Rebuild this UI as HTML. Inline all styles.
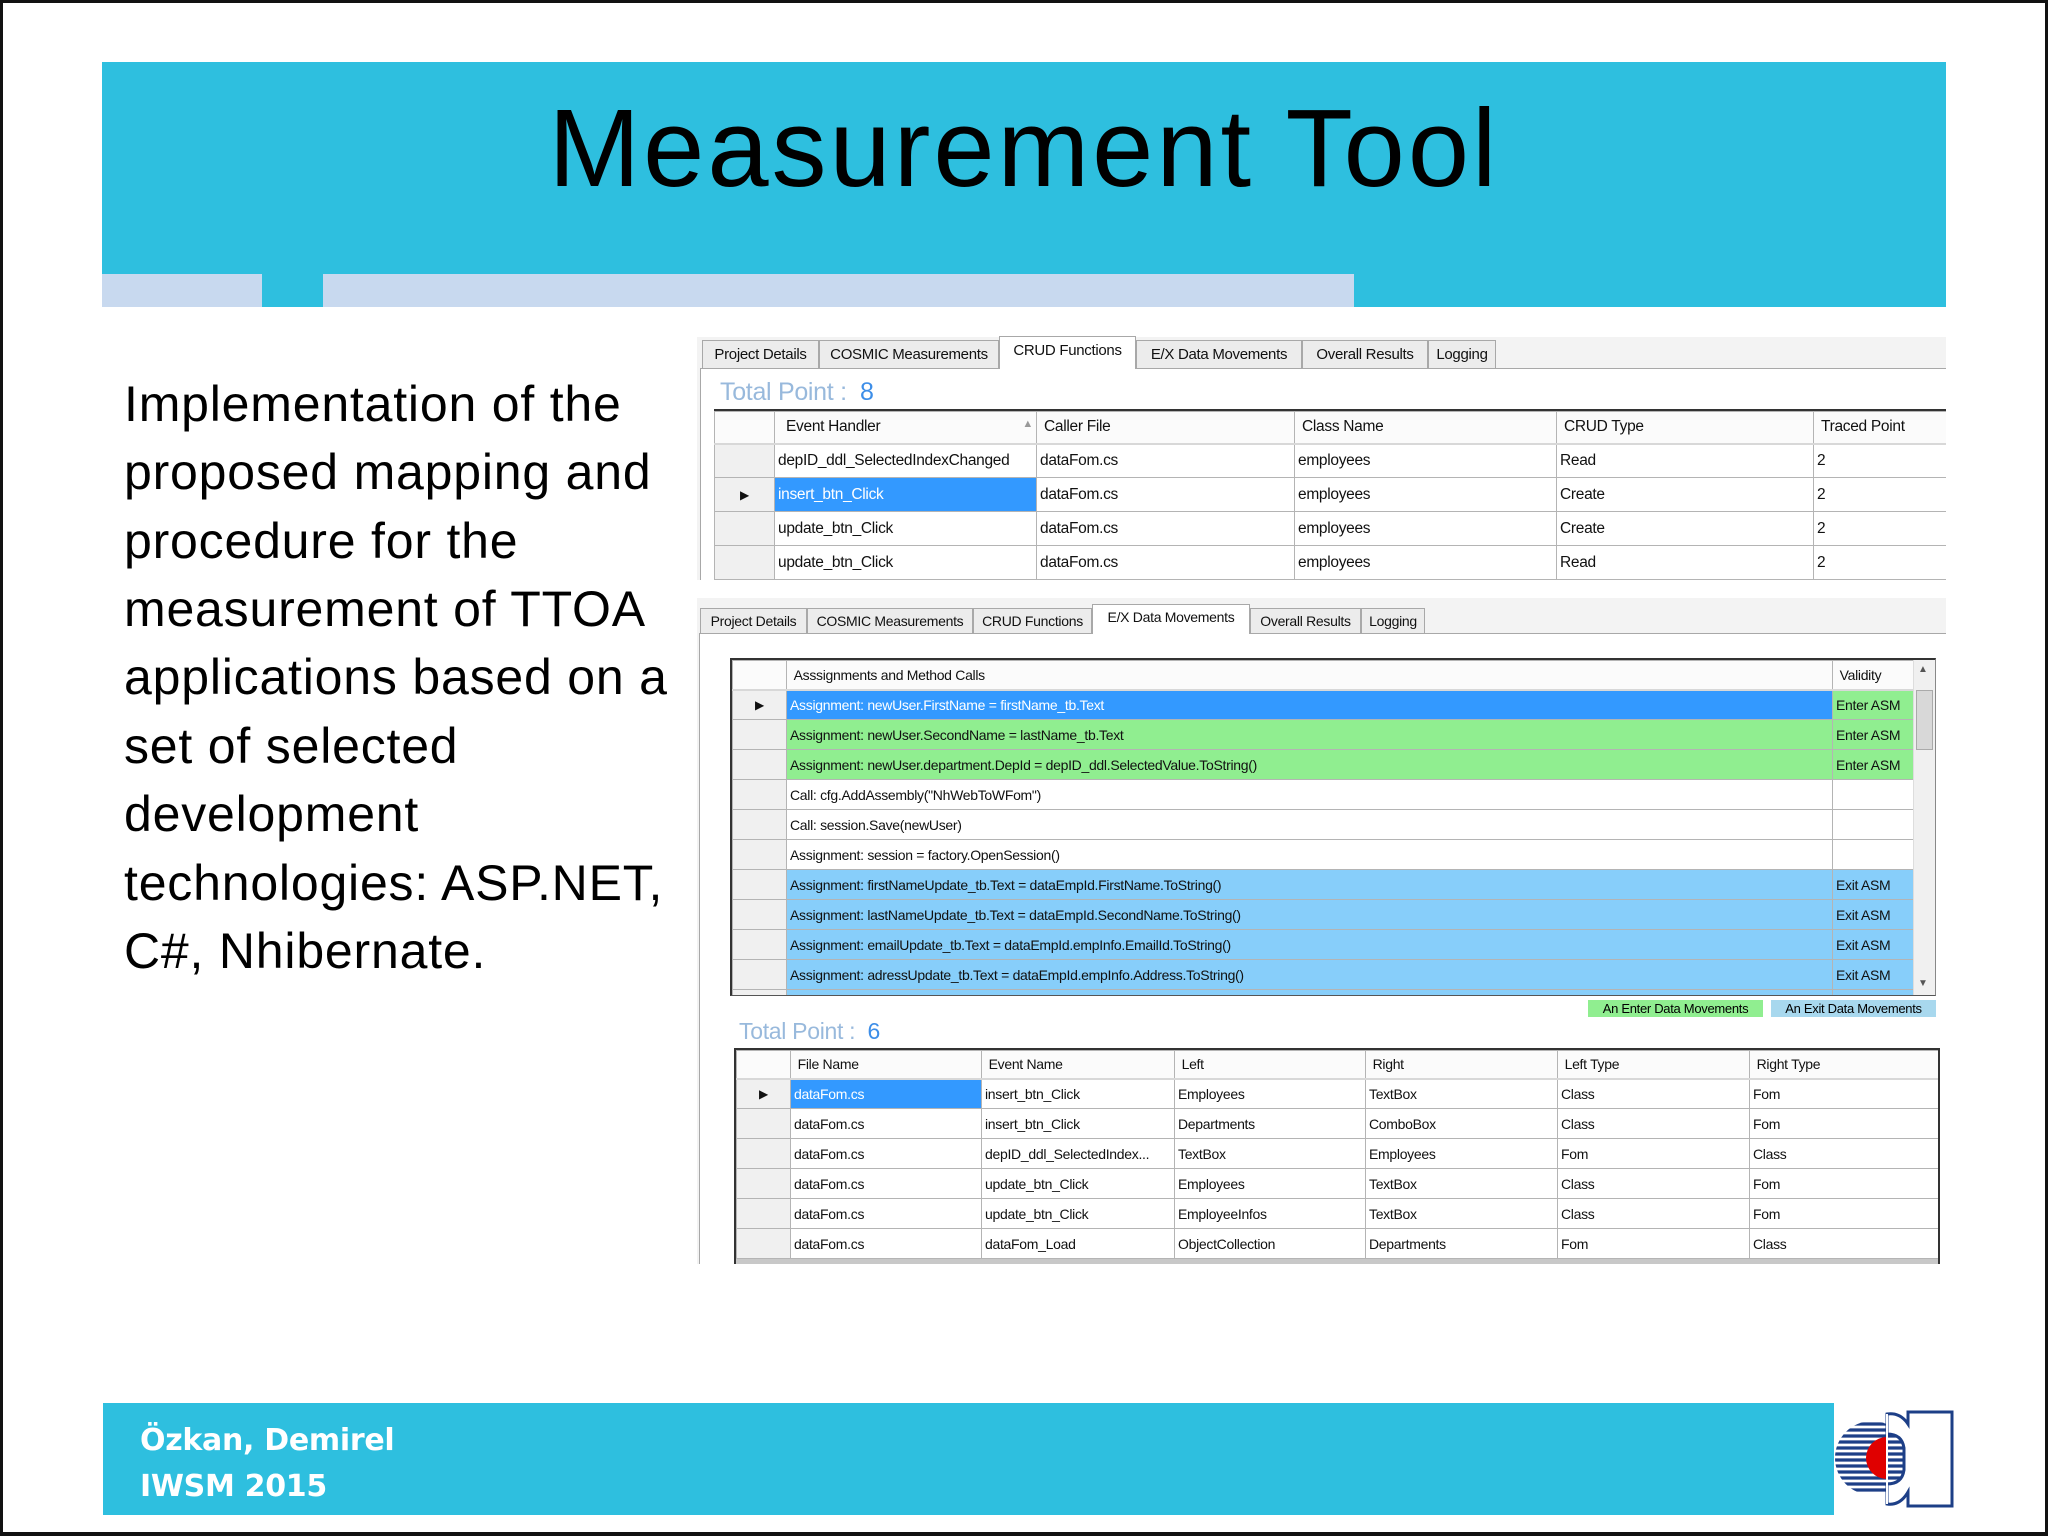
<!DOCTYPE html>
<html><head><meta charset="utf-8"><style>
*{margin:0;padding:0;box-sizing:border-box}
body{width:2048px;height:1536px;background:#fff;position:relative;overflow:hidden;font-family:"Liberation Sans",Arial,sans-serif}
.abs{position:absolute}
.line{position:absolute;left:124px;font-size:50px;letter-spacing:0.8px;white-space:nowrap;color:#000;line-height:1}
.tab{position:absolute;border:1px solid #a8a8a8;border-bottom:none;background:#ececec;font-size:15px;color:#111;text-align:center;white-space:nowrap;letter-spacing:-0.3px}
.tab.act{background:#fff}
table{border-collapse:collapse;table-layout:fixed;position:absolute;font-size:15.5px;letter-spacing:-0.3px}
td{border:1px solid #b4b4b4;padding:0 3px;white-space:nowrap;overflow:hidden;color:#111}
td.rh{background:#f0f0f0;border-right:1px solid #b4b4b4;padding:0;text-align:center;font-size:12px}
tr.hd td{background:#fbfbfb;border-bottom:2px solid #d8d8d8}
.sel{background:#3399ff;color:#fff}
.g{background:#90ee90}
.b{background:#87cefa}
</style></head><body>
<div class="abs" style="left:0;top:0;width:2048px;height:1536px;border:3px solid #111;border-bottom-width:4px"></div>

<div class="abs" style="left:102px;top:62px;width:1844px;height:245px;background:#2ebfdf"></div>
<div class="abs" style="left:102px;top:274px;width:160px;height:33px;background:#c8d9ef"></div>
<div class="abs" style="left:323px;top:274px;width:1031px;height:33px;background:#c8d9ef"></div>
<div class="abs" style="left:0;top:86px;width:2048px;text-align:center;font-size:110px;letter-spacing:3px;line-height:125px;color:#000">Measurement Tool</div>

<div class="line" style="top:379px">Implementation of the</div>
<div class="line" style="top:447px">proposed mapping and</div>
<div class="line" style="top:516px">procedure for the</div>
<div class="line" style="top:584px">measurement of TTOA</div>
<div class="line" style="top:652px">applications based on a</div>
<div class="line" style="top:721px">set of selected</div>
<div class="line" style="top:789px">development</div>
<div class="line" style="top:858px">technologies: ASP.NET,</div>
<div class="line" style="top:926px">C#, Nhibernate.</div>

<!-- screenshot 1 -->
<div class="abs" style="left:697px;top:337px;width:1249px;height:243px;background:#f3f3f3"></div>
<div class="abs" style="left:700px;top:368px;width:1246px;height:212px;background:#fff;border-left:1px solid #a8a8a8;border-top:1px solid #a8a8a8"></div>
<div class="tab" style="left:702px;top:340px;width:117px;height:28px;line-height:28px">Project Details</div>
<div class="tab" style="left:819px;top:340px;width:180px;height:28px;line-height:28px">COSMIC Measurements</div>
<div class="tab act" style="left:999px;top:336px;width:137px;height:33px;line-height:28px">CRUD Functions</div>
<div class="tab" style="left:1136px;top:340px;width:166px;height:28px;line-height:28px">E/X Data Movements</div>
<div class="tab" style="left:1302px;top:340px;width:126px;height:28px;line-height:28px">Overall Results</div>
<div class="tab" style="left:1428px;top:340px;width:68px;height:28px;line-height:28px">Logging</div>
<div class="abs" style="left:720px;top:376px;font-size:25px;line-height:32px;color:#98b9dc;letter-spacing:-0.3px">Total Point :&nbsp;&nbsp;<span style="color:#3d8ee8">8</span></div>
<div class="abs" style="left:714px;top:409px;width:1232px;height:2px;background:#333"></div>
<div class="abs" style="left:714px;top:411px;width:1232px;height:169px;overflow:hidden">
<table style="left:0;top:0;width:1240px">
<col style="width:60px"><col style="width:262px"><col style="width:258px"><col style="width:262px"><col style="width:257px"><col style="width:141px">
<tr class="hd" style="height:32px"><td class="rh"></td><td>&nbsp;&nbsp;Event Handler<span style="float:right;color:#999;font-size:11px">▲</span></td><td>&nbsp;Caller File</td><td>&nbsp;Class Name</td><td>&nbsp;CRUD Type</td><td>&nbsp;Traced Point</td></tr>
<tr style="height:34px"><td class="rh"></td><td>depID_ddl_SelectedIndexChanged</td><td>dataFom.cs</td><td>employees</td><td>Read</td><td>2</td></tr>
<tr style="height:34px"><td class="rh">▶</td><td class="sel">insert_btn_Click</td><td>dataFom.cs</td><td>employees</td><td>Create</td><td>2</td></tr>
<tr style="height:34px"><td class="rh"></td><td>update_btn_Click</td><td>dataFom.cs</td><td>employees</td><td>Create</td><td>2</td></tr>
<tr style="height:34px"><td class="rh"></td><td>update_btn_Click</td><td>dataFom.cs</td><td>employees</td><td>Read</td><td>2</td></tr>
</table>
</div>

<!-- screenshot 2 -->
<div class="abs" style="left:697px;top:598px;width:1249px;height:666px;background:#f3f3f3"></div>
<div class="abs" style="left:699px;top:633px;width:1247px;height:631px;background:#fff;border-left:1px solid #a8a8a8;border-top:1px solid #a8a8a8"></div>
<div class="tab" style="left:700px;top:608px;width:107px;height:25px;line-height:25px;font-size:14px">Project Details</div>
<div class="tab" style="left:807px;top:608px;width:166px;height:25px;line-height:25px;font-size:14px">COSMIC Measurements</div>
<div class="tab" style="left:973px;top:608px;width:119px;height:25px;line-height:25px;font-size:14px">CRUD Functions</div>
<div class="tab act" style="left:1092px;top:604px;width:158px;height:30px;line-height:24px;font-size:14px">E/X Data Movements</div>
<div class="tab" style="left:1250px;top:608px;width:111px;height:25px;line-height:25px;font-size:14px">Overall Results</div>
<div class="tab" style="left:1361px;top:608px;width:64px;height:25px;line-height:25px;font-size:14px">Logging</div>

<div class="abs" style="left:730px;top:658px;width:1206px;height:338px;border:2px solid #333;border-right:1px solid #888;border-bottom:1px solid #555;overflow:hidden;background:#fff">
<table style="left:0;top:0;width:1181px;font-size:14px">
<col style="width:54px"><col style="width:1046px"><col style="width:81px">
<tr class="hd" style="height:29px"><td class="rh"></td><td>&nbsp;Asssignments and Method Calls</td><td>&nbsp;Validity</td></tr>
<tr style="height:30px"><td class="rh">▶</td><td class="sel">Assignment: newUser.FirstName = firstName_tb.Text</td><td class="g">Enter ASM</td></tr>
<tr style="height:30px"><td class="rh"></td><td class="g">Assignment: newUser.SecondName = lastName_tb.Text</td><td class="g">Enter ASM</td></tr>
<tr style="height:30px"><td class="rh"></td><td class="g">Assignment: newUser.department.DepId = depID_ddl.SelectedValue.ToString()</td><td class="g">Enter ASM</td></tr>
<tr style="height:30px"><td class="rh"></td><td>Call: cfg.AddAssembly("NhWebToWFom")</td><td></td></tr>
<tr style="height:30px"><td class="rh"></td><td>Call: session.Save(newUser)</td><td></td></tr>
<tr style="height:30px"><td class="rh"></td><td>Assignment: session = factory.OpenSession()</td><td></td></tr>
<tr style="height:30px"><td class="rh"></td><td class="b">Assignment: firstNameUpdate_tb.Text = dataEmpId.FirstName.ToString()</td><td class="b">Exit ASM</td></tr>
<tr style="height:30px"><td class="rh"></td><td class="b">Assignment: lastNameUpdate_tb.Text = dataEmpId.SecondName.ToString()</td><td class="b">Exit ASM</td></tr>
<tr style="height:30px"><td class="rh"></td><td class="b">Assignment: emailUpdate_tb.Text = dataEmpId.empInfo.EmailId.ToString()</td><td class="b">Exit ASM</td></tr>
<tr style="height:30px"><td class="rh"></td><td class="b">Assignment: adressUpdate_tb.Text = dataEmpId.empInfo.Address.ToString()</td><td class="b">Exit ASM</td></tr>
<tr style="height:30px"><td class="rh"></td><td class="b"></td><td class="b"></td></tr>
</table>
<div class="abs" style="left:1181px;top:0;width:23px;height:336px;background:#f0f0f0;border-left:1px solid #ddd"></div>
<div class="abs" style="left:1184px;top:30px;width:17px;height:60px;background:#d8d8d8;border:1px solid #aaa"></div>
<div class="abs" style="left:1186px;top:4px;font-size:10px;color:#555">▲</div>
<div class="abs" style="left:1186px;top:318px;font-size:10px;color:#555">▼</div>
</div>

<div class="abs" style="left:1588px;top:1000px;width:175px;height:17px;background:#90ee90;font-size:13px;line-height:17px;text-align:center;letter-spacing:-0.3px">An Enter Data Movements</div>
<div class="abs" style="left:1771px;top:1000px;width:165px;height:17px;background:#a8d8ee;font-size:13px;line-height:17px;text-align:center;letter-spacing:-0.3px">An Exit Data Movements</div>
<div class="abs" style="left:739px;top:1016px;font-size:23px;line-height:30px;color:#98b9dc;letter-spacing:-0.3px">Total Point :&nbsp;&nbsp;<span style="color:#3d8ee8">6</span></div>

<div class="abs" style="left:734px;top:1048px;width:1206px;height:216px;border:2px solid #333;border-bottom:none;overflow:hidden;background:#c8c8c8">
<table style="left:0;top:0;width:1204px;font-size:14px;background:#fff">
<col style="width:54px"><col style="width:191px"><col style="width:193px"><col style="width:191px"><col style="width:192px"><col style="width:192px"><col style="width:191px">
<tr class="hd" style="height:28px"><td class="rh"></td><td>&nbsp;File Name</td><td>&nbsp;Event Name</td><td>&nbsp;Left</td><td>&nbsp;Right</td><td>&nbsp;Left Type</td><td>&nbsp;Right Type</td></tr>
<tr style="height:30px"><td class="rh">▶</td><td class="sel">dataFom.cs</td><td>insert_btn_Click</td><td>Employees</td><td>TextBox</td><td>Class</td><td>Fom</td></tr>
<tr style="height:30px"><td class="rh"></td><td>dataFom.cs</td><td>insert_btn_Click</td><td>Departments</td><td>ComboBox</td><td>Class</td><td>Fom</td></tr>
<tr style="height:30px"><td class="rh"></td><td>dataFom.cs</td><td>depID_ddl_SelectedIndex...</td><td>TextBox</td><td>Employees</td><td>Fom</td><td>Class</td></tr>
<tr style="height:30px"><td class="rh"></td><td>dataFom.cs</td><td>update_btn_Click</td><td>Employees</td><td>TextBox</td><td>Class</td><td>Fom</td></tr>
<tr style="height:30px"><td class="rh"></td><td>dataFom.cs</td><td>update_btn_Click</td><td>EmployeeInfos</td><td>TextBox</td><td>Class</td><td>Fom</td></tr>
<tr style="height:30px"><td class="rh"></td><td>dataFom.cs</td><td>dataFom_Load</td><td>ObjectCollection</td><td>Departments</td><td>Fom</td><td>Class</td></tr>
</table>
</div>

<!-- footer -->
<div class="abs" style="left:103px;top:1403px;width:1731px;height:112px;background:#2ebfdf"></div>
<div class="abs" style="left:140px;top:1418px;font-family:'DejaVu Sans',sans-serif;font-weight:bold;font-size:30px;line-height:46px;color:#fff;letter-spacing:-0.3px">Özkan, Demirel<br>IWSM 2015</div>

<!-- logo -->
<svg class="abs" style="left:1830px;top:1400px" width="130" height="120" viewBox="0 0 130 120">
<defs><clipPath id="cc"><circle cx="42" cy="58" r="37"/></clipPath></defs>
<g clip-path="url(#cc)" stroke="#1d3f87" stroke-width="3.2">
<line x1="0" y1="24" x2="90" y2="24"/><line x1="0" y1="30" x2="90" y2="30"/><line x1="0" y1="36" x2="90" y2="36"/><line x1="0" y1="42" x2="90" y2="42"/><line x1="0" y1="48" x2="90" y2="48"/><line x1="0" y1="54" x2="90" y2="54"/><line x1="0" y1="60" x2="90" y2="60"/><line x1="0" y1="66" x2="90" y2="66"/><line x1="0" y1="72" x2="90" y2="72"/><line x1="0" y1="78" x2="90" y2="78"/><line x1="0" y1="84" x2="90" y2="84"/><line x1="0" y1="90" x2="90" y2="90"/>
</g>
<path d="M57 14 Q70 12 78 24 L78 12 L122 12 L122 106 L78 106 L78 92 Q70 106 57 104 L57 84 Q72 84 74 70 L74 48 Q72 34 57 34 Z" fill="#fff" stroke="#1d3f87" stroke-width="3"/>
<path d="M57 37 A21 21 0 0 0 57 79 Z" fill="#e00000"/>
<line x1="57" y1="14" x2="57" y2="104" stroke="#fff" stroke-width="2"/>
</svg>
</body></html>
